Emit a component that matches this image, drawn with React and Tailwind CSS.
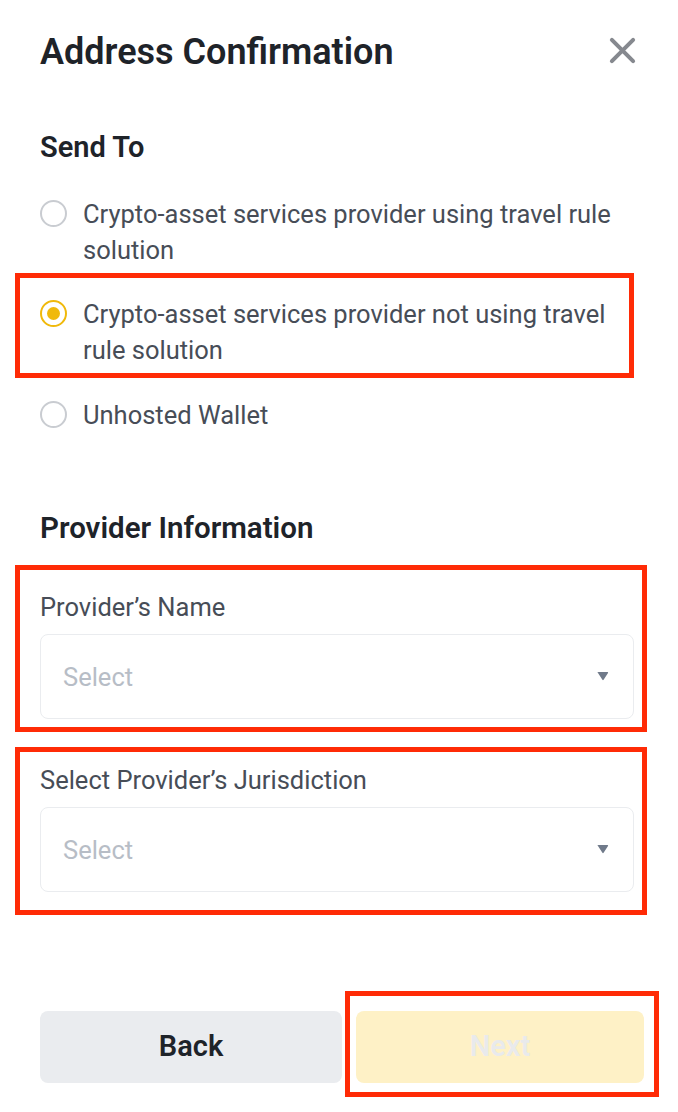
import React from "react";

function Radio({ checked }) {
  return checked ? (
    <span className="mt-[4px] flex h-[27px] w-[27px] shrink-0 items-center justify-center rounded-full border-[2px] border-[#f0b90b]">
      <span className="h-[13px] w-[13px] rounded-full bg-[#f0b90b]" />
    </span>
  ) : (
    <span className="mt-[4px] h-[27px] w-[27px] shrink-0 rounded-full border-[2px] border-[#c9ccd1]" />
  );
}

function SelectBox() {
  return (
    <div className="flex h-[85px] w-[594px] items-center justify-between rounded-[8px] border border-[#eaecef] pl-[22px] pr-[24px]">
      <span className="text-[25.5px] leading-[36px] text-[#b7bdc6]">Select</span>
      <svg width="12" height="9" viewBox="0 0 12 9">
        <path d="M0.5 1 Q0.5 0 1.5 0 H10.5 Q11.5 0 11 1 L6.6 7.8 Q6 8.6 5.4 7.8 L1 1 Z" fill="#707a8a" />
      </svg>
    </div>
  );
}

export default function App() {
  return (
    <div
      className="h-[1112px] w-[678px] bg-white text-[#474d57]"
      style={{ fontFamily: "Roboto, 'Liberation Sans', sans-serif" }}
    >
      <div className="flex items-center justify-between pl-[40px] pr-[42px] pt-[30px]">
        <h1 className="text-[36px] font-semibold leading-[44px] text-[#1e2329]">Address Confirmation</h1>
        <svg width="27" height="27" viewBox="0 0 28 28" className="mt-[-4px]">
          <path d="M3 3 L25 25 M25 3 L3 25" stroke="#86898f" strokeWidth="4.2" strokeLinecap="round" />
        </svg>
      </div>

      <h2 className="mt-[55px] pl-[40px] text-[29px] font-semibold leading-[36px] text-[#1e2329]">Send To</h2>

      <div className="mt-[31px] flex gap-[16px] pl-[40px] pr-[40px]">
        <Radio />
        <p className="text-[25.5px] leading-[36px]">Crypto-asset services provider using travel rule solution</p>
      </div>

      <div className="ml-[15px] mt-[5px] w-[619px] border-[5px] border-[#ff2b06] pb-[5px] pl-[20px] pr-[6px] pt-[18px]">
        <div className="flex gap-[16px]">
          <Radio checked />
          <p className="text-[25.5px] leading-[36px]">Crypto-asset services provider not using travel rule solution</p>
        </div>
      </div>

      <div className="mt-[19px] flex gap-[16px] pl-[40px]">
        <Radio />
        <p className="text-[25.5px] leading-[36px]">Unhosted Wallet</p>
      </div>

      <h2 className="mt-[77px] pl-[40px] text-[29.5px] font-semibold leading-[36px] text-[#1e2329]">Provider Information</h2>

      <div className="ml-[15px] mt-[19px] w-[632px] border-[5px] border-[#ff2b06] pb-[8px] pl-[20px] pt-[19px]">
        <p className="text-[25.5px] leading-[36px]">Provider’s Name</p>
        <div className="mt-[9px]">
          <SelectBox />
        </div>
      </div>

      <div className="ml-[15px] mt-[15px] w-[632px] border-[5px] border-[#ff2b06] pb-[18px] pl-[20px] pt-[10px]">
        <p className="text-[25.5px] leading-[36px]">Select Provider’s Jurisdiction</p>
        <div className="mt-[9px]">
          <SelectBox />
        </div>
      </div>

      <div className="mt-[76px] flex items-start pl-[40px]">
        <button className="mt-[20px] h-[72px] w-[302px] rounded-[8px] bg-[#eaecef] text-[29px] font-semibold text-[#1e2329]">
          Back
        </button>
        <div className="ml-[3px] border-[5px] border-[#ff2b06] pb-[9px] pl-[6px] pr-[10px] pt-[15px]">
          <button className="h-[72px] w-[288px] rounded-[8px] bg-[#fef1c6] text-[29px] font-semibold text-[#e9eaec]">
            Next
          </button>
        </div>
      </div>
    </div>
  );
}
